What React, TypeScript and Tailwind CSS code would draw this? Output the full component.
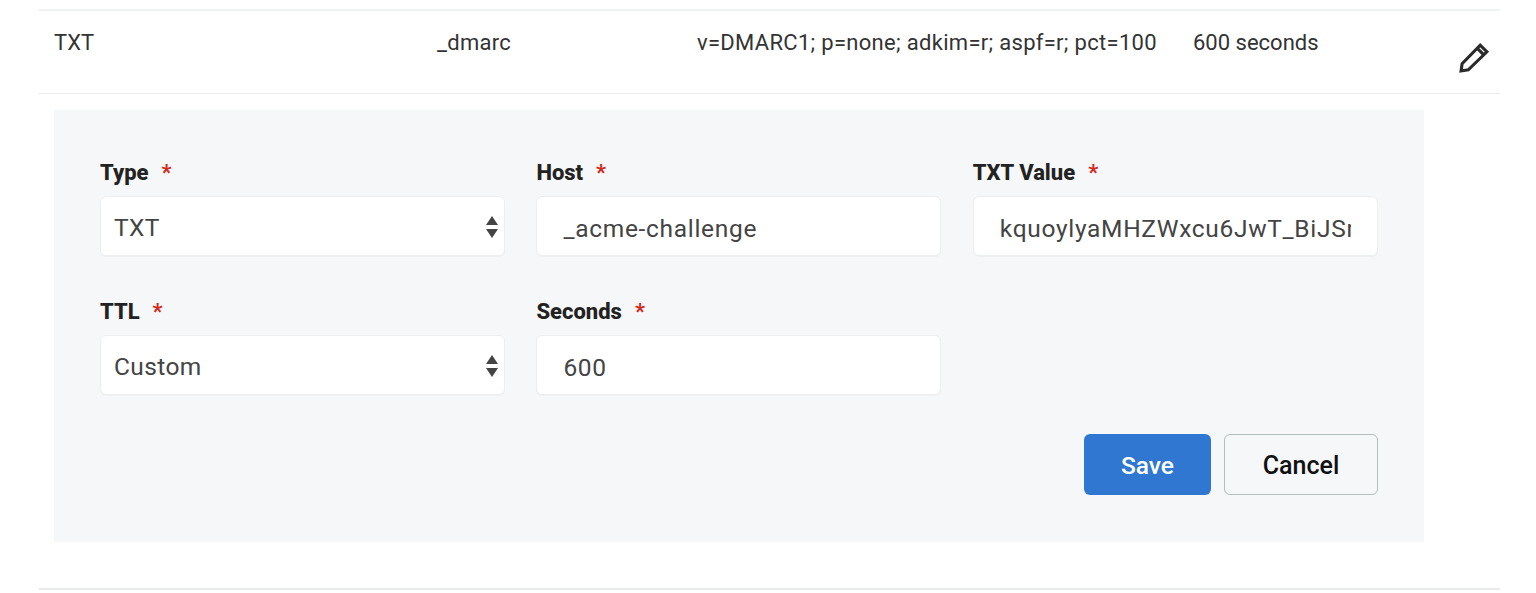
import React from 'react';

const SANS = 'font-["Roboto",sans-serif]';

function Label({ text }: { text: string }) {
  return (
    <label className="block h-[28px] mb-[10px] pt-px text-[22px] leading-[28px] font-extrabold text-[#222222]">
      {text}
      <span className="ml-[13px] font-bold text-[#d4291c]">*</span>
    </label>
  );
}

function SelectField({ label, value }: { label: string; value: string }) {
  return (
    <div>
      <Label text={label} />
      <div className="relative">
        <select
          defaultValue={value}
          className="block w-full h-[60px] pl-[13px] pt-[5px] appearance-none bg-white rounded-[6px] border border-[#eceef0] shadow-[0_1px_1px_rgba(0,0,0,0.03)] text-[24.5px] tracking-[0.4px] text-[#444444] outline-none"
        >
          <option>{value}</option>
        </select>
        <svg className="absolute right-[6px] top-[20px] w-[14px] h-[22px]" viewBox="0 0 14 22" fill="#444444">
          <path d="M7 0l6 9H1z" />
          <path d="M7 22l-6-9h12z" />
        </svg>
      </div>
    </div>
  );
}

function InputField({ label, value }: { label: string; value: string }) {
  return (
    <div>
      <Label text={label} />
      <input
        readOnly
        value={value}
        className="block w-full h-[60px] px-[26px] pt-[4px] bg-white rounded-[6px] border border-[#eceef0] shadow-[0_1px_1px_rgba(0,0,0,0.03)] text-[24.5px] tracking-[0.7px] text-[#444444] outline-none"
      />
    </div>
  );
}

export default function App() {
  return (
    <div className={`${SANS} w-[1536px] h-[593px] bg-white overflow-hidden pt-[9px] pl-[39px]`}>
      <div className="w-[1461px]">
        {/* Record row */}
        <div className="grid grid-cols-[383px_260px_496px_1fr] h-[85px] pl-[15px] border-t-2 border-t-[#eff1f2] border-b border-b-[#e8eaeb] text-[22px] text-[#333333]">
          <div className="pt-[17px] leading-[30px]">TXT</div>
          <div className="pt-[17px] leading-[30px] tracking-[0.3px]">_dmarc</div>
          <div className="pt-[17px] leading-[30px] whitespace-nowrap tracking-[0.3px]">v=DMARC1; p=none; adkim=r; aspf=r; pct=100</div>
          <div className="flex justify-between pr-[10px]">
            <span className="pt-[17px] leading-[30px]">600 seconds</span>
            <svg className="mt-[31px] w-[31px] h-[31px]" viewBox="0 0 30 30" fill="none" stroke="#2b2b2b" strokeWidth="3" strokeLinejoin="miter">
              <path d="M2 28l1-7L20.5 3l6.5 6.5L9 27z" />
              <path d="M17.5 6l6.5 6.5" />
            </svg>
          </div>
        </div>

        {/* Edit form */}
        <div className="ml-[15px] mt-[16px] w-[1370px] h-[432px] bg-[#f5f7f8] pt-[48px] pl-[46px]">
          <div className="grid grid-cols-[405px_405px_405px] gap-x-[31.4px] gap-y-[41px]">
            <SelectField label="Type" value="TXT" />
            <InputField label="Host" value="_acme-challenge" />
            <InputField label="TXT Value" value="kquoylyaMHZWxcu6JwT_BiJSmNpQ2rXe" />
            <SelectField label="TTL" value="Custom" />
            <InputField label="Seconds" value="600" />
          </div>
          <div className="flex justify-end gap-[13px] w-[1278px] mt-[39px]">
            <button className="w-[127px] h-[61px] pt-[3px] rounded-[6px] bg-[#2f77d0] text-white text-[24.5px] font-medium">Save</button>
            <button className="w-[154px] h-[61px] pt-[3px] rounded-[6px] border border-[#b4bcbd] text-[#111111] text-[25px] font-medium">Cancel</button>
          </div>
        </div>

        <div className="mt-[46px] border-t-2 border-[#e8eaeb]" />
      </div>
    </div>
  );
}
